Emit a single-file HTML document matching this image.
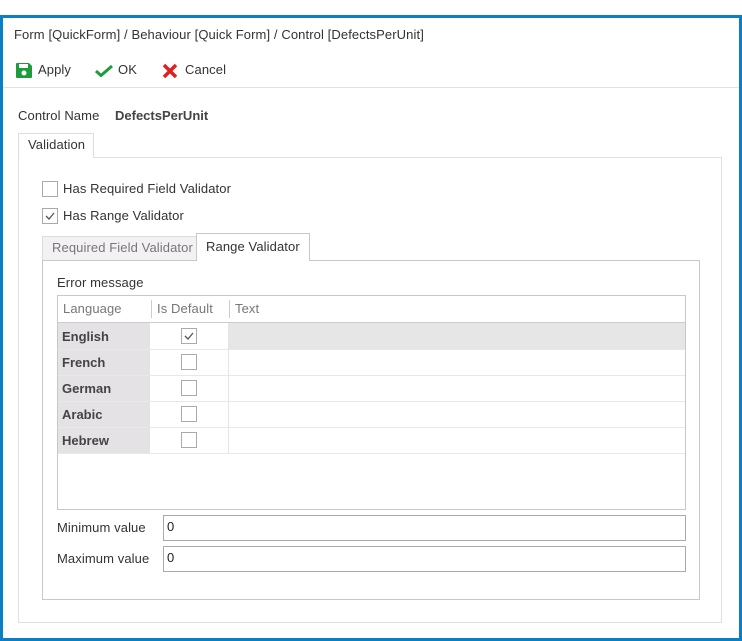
<!DOCTYPE html>
<html><head><meta charset="utf-8"><style>
*{box-sizing:border-box;margin:0;padding:0}
body{width:742px;height:641px;background:#fff;position:relative;overflow:hidden;font-family:"Liberation Sans",sans-serif;font-size:13px;color:#333}
.a{position:absolute}
.t{position:absolute;white-space:nowrap;letter-spacing:0.1px;margin-top:-1px}
.cb{position:absolute;width:16px;height:16px;border:1px solid #aaa;background:#fff}
.b{font-weight:bold;color:#444;letter-spacing:0}
</style></head><body>
<div class="a" style="left:0;top:15px;width:742px;height:626px;border:3px solid #0a7fc4"></div>
<div class="t" style="left:14px;top:28px">Form [QuickForm] / Behaviour [Quick Form] / Control [DefectsPerUnit]</div>
<svg class="a" style="left:15px;top:62px" width="18" height="17" viewBox="0 0 18 17"><path d="M1 2Q1 1 2 1H14L17 4V15Q17 16 16 16H2Q1 16 1 15Z" fill="#1e9c3c"/><rect x="4" y="2" width="9" height="4" fill="#fff"/><circle cx="9" cy="11" r="2.5" fill="#fff"/></svg>
<div class="t" style="left:38px;top:63px">Apply</div>
<svg class="a" style="left:95px;top:65px" width="18" height="12" viewBox="0 0 18 12"><path d="M1 6L6 10.5L17 1" stroke="#1e9c3c" stroke-width="3" fill="none"/></svg>
<div class="t" style="left:118px;top:63px">OK</div>
<svg class="a" style="left:162px;top:63px" width="16" height="16" viewBox="0 0 16 16"><path d="M2 2L14 14M14 2L2 14" stroke="#e02020" stroke-width="3.5"/></svg>
<div class="t" style="left:185px;top:63px">Cancel</div>
<div class="a" style="left:3px;top:87px;width:736px;height:1px;background:#e2e2e2"></div>
<div class="t" style="left:18px;top:109px">Control Name</div>
<div class="t b" style="left:115px;top:109px">DefectsPerUnit</div>
<div class="a" style="left:18px;top:157px;width:704px;height:466px;border:1px solid #e0dfe0"></div>
<div class="a" style="left:18px;top:133px;width:76px;height:25px;border:1px solid #ddd;border-bottom:none;background:#fff"></div>
<div class="t" style="left:28px;top:138px">Validation</div>
<div class="cb" style="left:42px;top:181px"></div>
<div class="t" style="left:63px;top:182px">Has Required Field Validator</div>
<div class="cb" style="left:42px;top:208px"></div>
<svg class="a" style="left:45px;top:212px" width="10" height="8"><path d="M1 4L4 7L9 1" stroke="#555" stroke-width="1.3" fill="none"/></svg>
<div class="t" style="left:63px;top:209px">Has Range Validator</div>
<div class="a" style="left:42px;top:260px;width:658px;height:340px;border:1px solid #c8c8c8"></div>
<div class="a" style="left:42px;top:236px;width:155px;height:24px;border:1px solid #ddd;border-bottom:none;background:#f3f1f3"></div>
<div class="t" style="left:52px;top:241px;color:#777">Required Field Validator</div>
<div class="a" style="left:196px;top:233px;width:114px;height:28px;border:1px solid #c8c8c8;border-bottom:none;background:#fff"></div>
<div class="t" style="left:206px;top:240px">Range Validator</div>
<div class="t" style="left:57px;top:276px">Error message</div>
<div class="a" style="left:57px;top:295px;width:629px;height:215px;border:1px solid #c8c8c8"></div>
<div class="a" style="left:58px;top:322px;width:627px;height:1px;background:#ccc"></div>
<div class="a" style="left:151px;top:300px;width:1px;height:18px;background:#ccc"></div>
<div class="a" style="left:229px;top:300px;width:1px;height:18px;background:#ccc"></div>
<div class="t" style="left:63px;top:302px;color:#777">Language</div>
<div class="t" style="left:157px;top:302px;color:#777">Is Default</div>
<div class="t" style="left:235px;top:302px;color:#777">Text</div>
<div class="a" style="left:58px;top:323px;width:92px;height:130px;background:#e4e2e4"></div>
<div class="a" style="left:228px;top:323px;width:457px;height:26px;background:#e6e6e6"></div>
<div class="a" style="left:228px;top:323px;width:1px;height:130px;background:#e4e4e4"></div>
<div class="a" style="left:58px;top:349px;width:627px;height:1px;background:#e8e8e8"></div>
<div class="a" style="left:58px;top:375px;width:627px;height:1px;background:#e8e8e8"></div>
<div class="a" style="left:58px;top:401px;width:627px;height:1px;background:#e8e8e8"></div>
<div class="a" style="left:58px;top:427px;width:627px;height:1px;background:#e8e8e8"></div>
<div class="a" style="left:58px;top:453px;width:627px;height:1px;background:#e8e8e8"></div>
<div class="t b" style="left:62px;top:330px">English</div>
<div class="t b" style="left:62px;top:356px">French</div>
<div class="t b" style="left:62px;top:382px">German</div>
<div class="t b" style="left:62px;top:408px">Arabic</div>
<div class="t b" style="left:62px;top:434px">Hebrew</div>
<div class="cb" style="left:181px;top:328px"></div>
<svg class="a" style="left:184px;top:332px" width="10" height="8"><path d="M1 4L4 7L9 1" stroke="#555" stroke-width="1.3" fill="none"/></svg>
<div class="cb" style="left:181px;top:354px"></div>
<div class="cb" style="left:181px;top:380px"></div>
<div class="cb" style="left:181px;top:406px"></div>
<div class="cb" style="left:181px;top:432px"></div>
<div class="t" style="left:57px;top:521px">Minimum value</div>
<div class="a" style="left:163px;top:515px;width:523px;height:26px;border:1px solid #aaa"></div>
<div class="t" style="left:167px;top:520px;color:#222">0</div>
<div class="t" style="left:57px;top:552px">Maximum value</div>
<div class="a" style="left:163px;top:546px;width:523px;height:26px;border:1px solid #aaa"></div>
<div class="t" style="left:167px;top:551px;color:#222">0</div>
</body></html>
